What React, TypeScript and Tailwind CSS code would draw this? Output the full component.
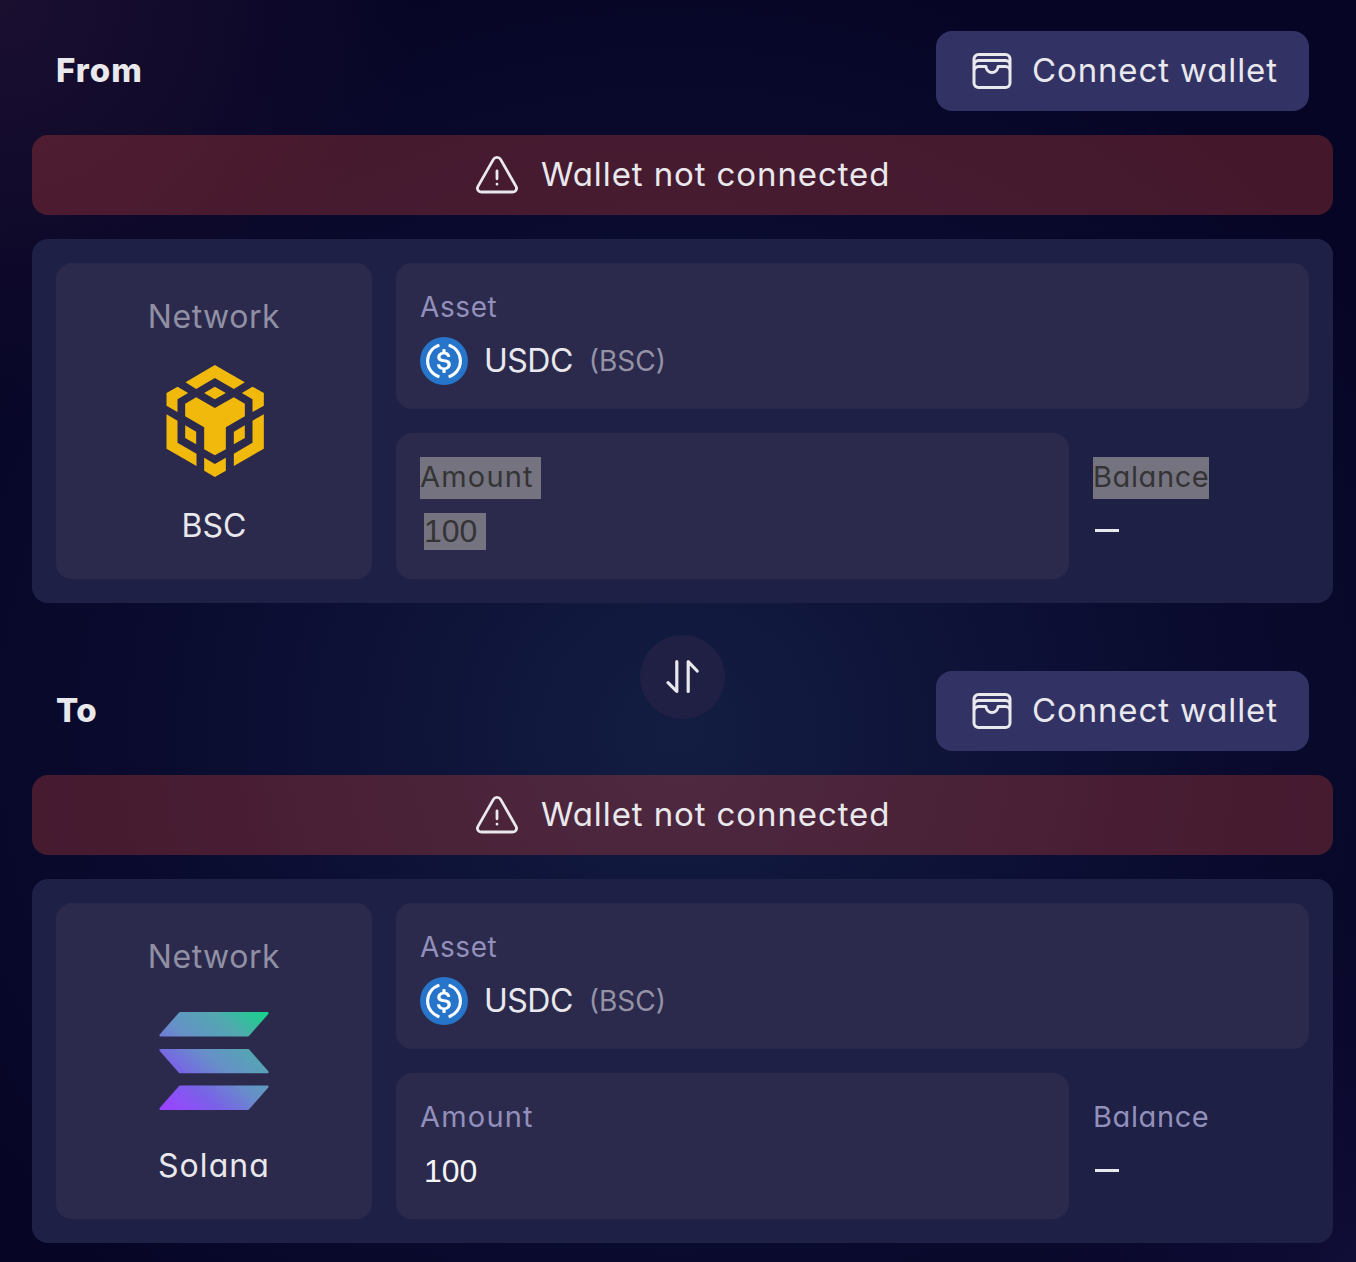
import { clsx } from 'clsx';
import type { ReactNode } from 'react';
import { HiOutlineWallet } from 'react-icons/hi2';

type SectionProps = {
  title: string;
  titleClass: string;
  network: string;
  networkClass: string;
  logo: ReactNode;
  selected?: boolean;
};

const BscLogo = () => (
  <svg className="ml-px h-[112px] w-[98px]" viewBox="78 45 293 336" fill="#F0B90B">
    <polygon points="224,45 314,97 281,117 224,84 168,117 136,97" />
    <polygon points="224,110 257,129 224,148 192,129" />
    <polygon points="112,110 144,129 112,148 112,186 79,167 79,129" />
    <polygon points="337,110 371,129 371,167 337,186 337,148 305,129" />
    <polygon points="168,142 224,174 281,142 314,161 314,199 257,232 257,298 224,316 192,298 192,232 135,199 135,161" />
    <polygon points="79,193 112,212 112,278 169,311 169,348 79,296" />
    <polygon points="371,193 337,212 337,278 281,311 281,348 371,296" />
    <polygon points="135,226 168,245 168,283 135,264" />
    <polygon points="314,226 281,245 281,283 314,264" />
    <polygon points="192,323 224,342 257,323 257,362 224,381 192,362" />
  </svg>
);

const SolanaLogo = () => (
  <svg className="h-[98px] w-[110px]" viewBox="0 0 110 98">
    <defs>
      <linearGradient id="sol" x1="8" y1="104" x2="102" y2="-6" gradientUnits="userSpaceOnUse">
        <stop offset="0.05" stopColor="#9945FF" />
        <stop offset="0.28" stopColor="#7962E7" />
        <stop offset="0.5" stopColor="#6690C8" />
        <stop offset="0.75" stopColor="#52A8B0" />
        <stop offset="0.97" stopColor="#19D08C" />
      </linearGradient>
    </defs>
    <g fill="url(#sol)" stroke="url(#sol)" strokeWidth="2.4" strokeLinejoin="round">
      <path d="M21 1.2H108.4L89 23.3H1.6Z" />
      <path d="M1.6 38.1H89L108.4 60.1H21Z" />
      <path d="M21 74.8H108.4L89 96.8H1.6Z" />
    </g>
  </svg>
);

const UsdcLogo = () => (
  <svg className="size-12" viewBox="0 0 48 48">
    <circle cx="24" cy="24" r="24" fill="#2775CA" />
    <g fill="none" stroke="#fff" strokeWidth="3">
      <path d="M19.4 8.1A16.6 16.6 0 0 0 19.4 39.9" />
      <path d="M28.6 8.1A16.6 16.6 0 0 1 28.6 39.9" />
    </g>
    <path
      transform="translate(-3.2 -2.4) scale(1.7 1.65)"
      fill="#fff"
      d="M20.022 18.124c0-2.124-1.28-2.852-3.84-3.156-1.828-.243-2.193-.728-2.193-1.578 0-.85.61-1.396 1.828-1.396 1.097 0 1.707.364 2.011 1.275a.458.458 0 00.427.303h.975a.416.416 0 00.427-.425v-.06a3.04 3.04 0 00-2.743-2.489V9.142c0-.243-.183-.425-.487-.486h-.915c-.243 0-.426.182-.487.486v1.396c-1.829.242-2.986 1.456-2.986 2.974 0 2.002 1.218 2.791 3.778 3.095 1.707.303 2.255.668 2.255 1.639 0 .97-.853 1.638-2.011 1.638-1.585 0-2.133-.667-2.316-1.578-.06-.242-.244-.364-.427-.364h-1.036a.416.416 0 00-.426.425v.06c.243 1.518 1.219 2.61 3.23 2.914v1.457c0 .242.183.425.487.485h.915c.243 0 .426-.182.487-.485V21.34c1.829-.303 3.047-1.578 3.047-3.217z"
    />
  </svg>
);

const WarningIcon = () => (
  <svg
    className="size-12"
    viewBox="0 0 24 24"
    fill="none"
    stroke="currentColor"
    strokeWidth="1.4"
    strokeLinecap="round"
    strokeLinejoin="round"
  >
    <path d="M2.5 17.7 10.2 4.2c.8-1.35 2.8-1.35 3.6 0l7.7 13.5c.8 1.3-.2 2.8-1.7 2.8H4.2c-1.5 0-2.5-1.5-1.7-2.8Z" />
    <path d="M12 10v3.9M12 16.6v.01" />
  </svg>
);

const SwapIcon = () => (
  <svg
    className="size-12"
    viewBox="0 0 48 48"
    fill="none"
    stroke="currentColor"
    strokeWidth="3.2"
    strokeLinecap="round"
    strokeLinejoin="round"
  >
    <path d="M17.8 8.7V38.5L9 29.6" />
    <path d="M29.2 38.5V8.7L38.2 18" />
  </svg>
);

const Section = ({ title, titleClass, network, networkClass, logo, selected }: SectionProps) => {
  const label = clsx(
    'h-[42px] whitespace-nowrap text-[29px] leading-[40px]',
    selected ? 'bg-[#74737f] text-[#343436]' : 'text-[#9290bb]'
  );

  return (
    <section className="flex flex-col gap-6">
      <div className="flex h-20 items-center justify-between px-6">
        <h2 className={clsx('text-[33px] font-extrabold', titleClass)}>{title}</h2>
        <button className="flex h-20 w-[373px] items-center gap-4 rounded-2xl bg-[#323265] pl-8">
          <HiOutlineWallet className="size-12 shrink-0" />
          <span className="whitespace-nowrap text-[33px] tracking-[0.87px]">Connect wallet</span>
        </button>
      </div>

      <div className="flex h-20 items-center rounded-2xl bg-[#ff503a]/25 pl-[441px]">
        <WarningIcon />
        <span className="ml-5 whitespace-nowrap text-[33px] tracking-[0.9px]">Wallet not connected</span>
      </div>

      <div className="flex h-[364px] gap-6 rounded-2xl bg-[#1f2046] p-6">
        <div className="flex w-[316px] shrink-0 flex-col items-center rounded-2xl bg-[#2b2a4d] pt-[30px]">
          <span className="text-[32px] leading-[48px] tracking-[0.55px] text-[#918fa3]">Network</span>
          <div className="flex h-[160px] items-center">{logo}</div>
          <span className={clsx('text-[32px] leading-[49px]', networkClass)}>{network}</span>
        </div>

        <div className="flex flex-1 flex-col gap-6">
          <div className="h-[146px] rounded-2xl bg-[#2b2a4d] px-6 pt-6">
            <div className="h-[42px] text-[28px] leading-[40px] tracking-[0.6px] text-[#9290bb]">Asset</div>
            <div className="mt-2 flex h-12 items-center">
              <UsdcLogo />
              <span className="ml-4 text-[32px] tracking-[-0.5px]">USDC</span>
              <span className="ml-4 text-[28px] text-[#9492a6]">(BSC)</span>
            </div>
          </div>

          <div className="flex h-[146px] gap-6">
            <div className="w-[673px] rounded-2xl bg-[#2b2a4d] px-6 pt-6">
              <div className={clsx(label, 'w-[121px] tracking-[1.2px]')}>Amount</div>
              <div
                className={clsx(
                  'mt-3.5 ml-1 h-[37px] w-[62px] font-["Liberation_Sans",Arial,sans-serif] text-[32px] leading-[36px]',
                  selected ? 'bg-[#74737f] text-[#343436]' : 'text-[#f5f5f7]'
                )}
              >
                100
              </div>
            </div>
            <div className="pt-6">
              <div className={clsx(label, 'w-[116px] tracking-[0.6px]')}>Balance</div>
              <div className="mt-[30px] ml-0.5 h-[3px] w-6 bg-[#e9e8ec]" />
            </div>
          </div>
        </div>
      </div>
    </section>
  );
};

const App = () => (
  <div className="h-[1262px] w-[1356px] overflow-hidden bg-[#050424] bg-[radial-gradient(circle_at_0%_0%,#1b0f30_0px,transparent_420px),radial-gradient(circle_at_100%_100%,#100d36_0px,transparent_360px),radial-gradient(ellipse_820px_780px_at_50%_58%,#131d42_0%,#0b0d31_55%,#060526_100%)] pt-[31px] pr-[23px] pl-8 font-[Inter,'Open_Sans',sans-serif] text-[#e9e8ec] [font-feature-settings:'cv11']">
    <Section title="From" titleClass="tracking-[1px]" network="BSC" networkClass="" logo={<BscLogo />} selected />

    <div className="relative h-[68px]">
      <button className="absolute top-8 left-[608px] flex h-[84px] w-[85px] items-center justify-center rounded-full bg-[#202045]">
        <SwapIcon />
      </button>
    </div>

    <Section
      title="To"
      titleClass="tracking-[0.5px]"
      network="Solana"
      networkClass="tracking-[1.1px]"
      logo={<SolanaLogo />}
    />
  </div>
);

export default App;
